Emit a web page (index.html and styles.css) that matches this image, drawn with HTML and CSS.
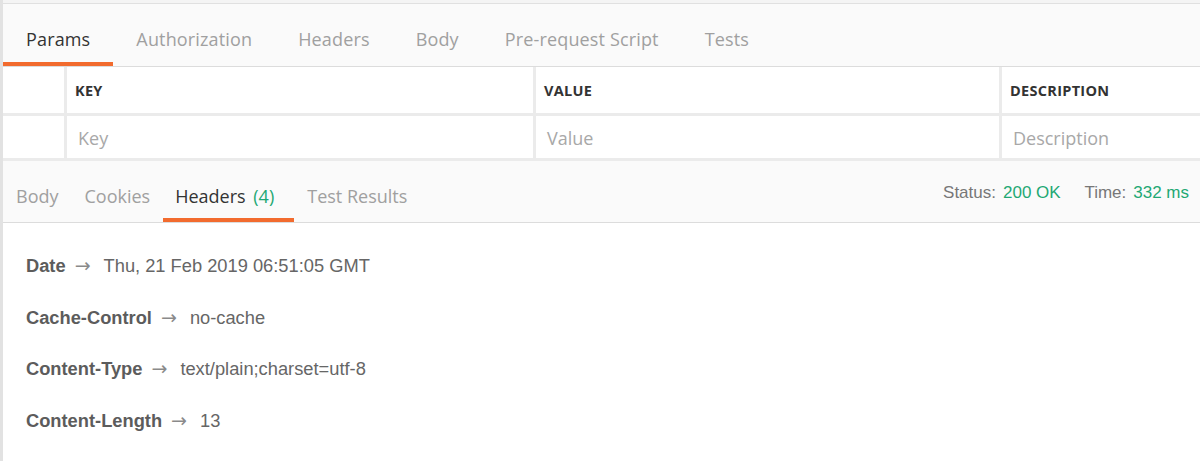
FILE: index.html
```html
<!DOCTYPE html>
<html lang="en">
<head>
  <meta charset="UTF-8" />
  <title>Request / Response</title>
  <link rel="stylesheet" href="styles.css">
</head>
<body>
  <div class="app">
    <div class="topline"></div>

    <nav class="tabs req-tabs">
      <div class="tab active">Params</div>
      <div class="tab">Authorization</div>
      <div class="tab">Headers</div>
      <div class="tab">Body</div>
      <div class="tab">Pre-request Script</div>
      <div class="tab">Tests</div>
    </nav>

    <div class="params">
      <div class="cell check"></div>
      <div class="cell head">KEY</div>
      <div class="cell head">VALUE</div>
      <div class="cell head">DESCRIPTION</div>

      <div class="cell check row2"></div>
      <div class="cell ph row2">Key</div>
      <div class="cell ph row2">Value</div>
      <div class="cell ph row2">Description</div>
    </div>

    <div class="res-bar">
      <nav class="tabs res-tabs">
        <div class="tab">Body</div>
        <div class="tab">Cookies</div>
        <div class="tab active wide">Headers <span class="count">(4)</span></div>
        <div class="tab">Test Results</div>
      </nav>
      <div class="meta">
        <span class="label">Status:</span><span class="val">200 OK</span>
        <span class="label time">Time:</span><span class="val">332 ms</span>
      </div>
    </div>

    <div class="res-headers">
      <div class="hrow"><b>Date</b><span class="arrow">→</span><span class="hval">Thu, 21 Feb 2019 06:51:05 GMT</span></div>
      <div class="hrow"><b>Cache-Control</b><span class="arrow">→</span><span class="hval">no-cache</span></div>
      <div class="hrow"><b>Content-Type</b><span class="arrow">→</span><span class="hval">text/plain;charset=utf-8</span></div>
      <div class="hrow"><b>Content-Length</b><span class="arrow">→</span><span class="hval">13</span></div>
    </div>
  </div>
</body>
</html>
```

FILE: styles.css
```css
* {
  box-sizing: border-box;
}
body {
  margin: 0;
  background: #fff;
  font-family: 'Open Sans', sans-serif;
}
.app {
  height: 461px;
  border-left: 3px solid #e2e2e2;
  overflow: hidden;
}
.topline {
  height: 4px;
  background: #f4f4f4;
  border-bottom: 1px solid #e0e0e0;
}

/* tabs */
.tabs {
  display: flex;
}
.tab {
  font-size: 18px;
  color: #a0a0a0;
  border-bottom: 4px solid transparent;
  white-space: nowrap;
}
.tab.active {
  color: #333;
  border-bottom-color: #f26b2e;
}
.req-tabs {
  height: 63px;
  background: #fafafa;
  border-bottom: 1px solid #dcdcdc;
}
.req-tabs .tab {
  padding: 22px 23px 0;
  line-height: 26px;
  height: 62px;
  letter-spacing: 0.15px;
}

/* params table */
.params {
  display: grid;
  grid-template-columns: 61px 469px 466px 1fr;
  grid-template-rows: 49px 45px;
}
.cell {
  border-bottom: 3px solid #ebebeb;
  border-left: 3px solid #ebebeb;
  padding-left: 8px;
  display: flex;
  align-items: center;
}
.cell.check {
  border-left: none;
}
.head {
  font-size: 14.5px;
  font-weight: bold;
  color: #333;
  letter-spacing: 0.3px;
}
.ph {
  font-size: 18px;
  color: #a8a8a8;
  padding-left: 11px;
  padding-top: 2px;
}

/* response bar */
.res-bar {
  display: flex;
  justify-content: space-between;
  height: 62px;
  background: #fafafa;
  border-bottom: 1px solid #dcdcdc;
}
.res-tabs .tab {
  padding: 0 13px;
  line-height: 70px;
  height: 61px;
}
.res-tabs .wide {
  padding-left: 12px;
  padding-right: 20px;
}
.count {
  color: #1fa874;
  margin-left: 3px;
}
.meta {
  font-family: 'Liberation Sans', Arial, sans-serif;
  font-size: 17px;
  padding: 22px 11px 0 0;
}
.meta .label {
  color: #777;
  margin-right: 7px;
}
.meta .val {
  color: #1fa874;
}
.meta .time {
  margin-left: 19px;
}

/* response headers */
.res-headers {
  padding: 17px 0 0 23px;
  font-family: 'Liberation Sans', Arial, sans-serif;
  font-size: 18.3px;
}
.hrow {
  height: 51.7px;
  line-height: 51.7px;
  color: #666;
}
.hrow b {
  color: #5c5c5c;
}
.arrow {
  font-family: 'DejaVu Sans', sans-serif;
  color: #8a8a8a;
  font-size: 19px;
  line-height: 0;
  margin: 0 13px 0 9px;
}
```
